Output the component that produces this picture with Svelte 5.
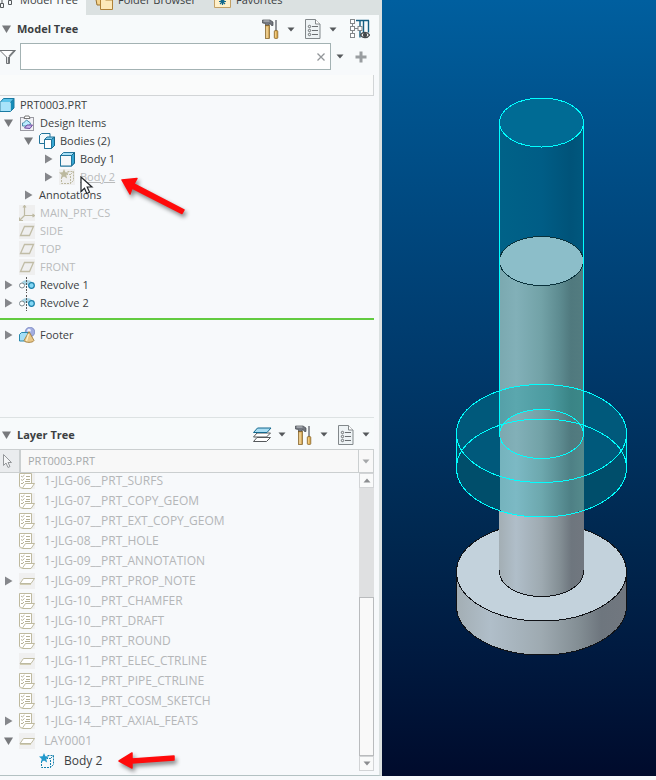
<script>
  const modelRows = [
    { level: 0, icon: 'part', text: 'PRT0003.PRT' },
    { level: 1, icon: 'clip', text: 'Design Items', arrow: 'down' },
    { level: 2, icon: 'bodies', text: 'Bodies (2)', arrow: 'down' },
    { level: 3, icon: 'body', text: 'Body 1', arrow: 'right' },
    { level: 3, icon: 'ghost', text: 'Body 2', arrow: 'right', tone: 'hidden', link: true },
    { level: 2, text: 'Annotations', arrow: 'right' },
    { level: 1, icon: 'csys', text: 'MAIN_PRT_CS', tone: 'hidden' },
    { level: 1, icon: 'plane', text: 'SIDE', tone: 'hidden' },
    { level: 1, icon: 'plane', text: 'TOP', tone: 'hidden' },
    { level: 1, icon: 'plane', text: 'FRONT', tone: 'hidden' },
    { level: 1, icon: 'revolve', text: 'Revolve 1', arrow: 'right' },
    { level: 1, icon: 'revolve', text: 'Revolve 2', arrow: 'right' }
  ];

  const layers = [
    { icon: 'rules', text: '1-JLG-06__PRT_SURFS' },
    { icon: 'rules', text: '1-JLG-07__PRT_COPY_GEOM' },
    { icon: 'rules', text: '1-JLG-07__PRT_EXT_COPY_GEOM' },
    { icon: 'rules', text: '1-JLG-08__PRT_HOLE' },
    { icon: 'rules', text: '1-JLG-09__PRT_ANNOTATION' },
    { icon: 'layer', text: '1-JLG-09__PRT_PROP_NOTE', arrow: 'right' },
    { icon: 'rules', text: '1-JLG-10__PRT_CHAMFER' },
    { icon: 'rules', text: '1-JLG-10__PRT_DRAFT' },
    { icon: 'rules', text: '1-JLG-10__PRT_ROUND' },
    { icon: 'layer', text: '1-JLG-11__PRT_ELEC_CTRLINE' },
    { icon: 'rules', text: '1-JLG-12__PRT_PIPE_CTRLINE' },
    { icon: 'rules', text: '1-JLG-13__PRT_COSM_SKETCH' },
    { icon: 'rules', text: '1-JLG-14__PRT_AXIAL_FEATS', arrow: 'right' },
    { icon: 'layer', text: 'LAY0001', arrow: 'down' },
    { icon: 'star', text: 'Body 2', child: true }
  ];

  let filter = $state('');
</script>

{#snippet twisty(dir)}
  <svg class="twisty" viewBox="0 0 10 10" aria-hidden="true">
    {#if dir === 'right'}
      <path d="M1 .5V9.500L8.500 5z" fill="#85878b" />
    {:else if dir === 'down'}
      <path d="M0 1.500H9L4.500 9z" fill="#77797c" />
    {/if}
  </svg>
{/snippet}

{#snippet caret()}
  <svg class="caret" viewBox="0 0 8 5" aria-hidden="true"><path d="M.5 .5h7L4 4.500z" fill="#55585b" /></svg>
{/snippet}

{#snippet tools()}
  <svg class="ico20" viewBox="0 0 20 20" aria-hidden="true">
    <path d="M1.500 1h7.500l3 2v3.500h-1.500L9.500 5H8v2H4.500V4.500L1.500 4z" fill="#73777f" stroke="#44484e" stroke-width=".7" />
    <path d="M2.500 2h6" stroke="#c8ccd2" />
    <rect x="4.500" y="6.500" width="4" height="13" fill="#d4a95c" stroke="#7d5a22" stroke-width=".7" />
    <path d="M6 7.500v11.500" stroke="#fae3ac" stroke-width="1.200" />
    <path d="M15 1v11" stroke="#777b82" stroke-width="1.600" />
    <rect x="13.300" y="11.500" width="3.500" height="8" rx="1" fill="#d9a748" stroke="#7d5a22" stroke-width=".7" />
    <path d="M14.700 12.500v6" stroke="#f5d594" />
  </svg>
{/snippet}

{#snippet sheet()}
  <svg class="ico20" viewBox="0 0 20 20" aria-hidden="true">
    <path d="M2.500 .5h10l4.500 4.500v14.500H2.500z" fill="#eef3f5" stroke="#82888b" />
    <path d="M12.500 .5V5H17" fill="#fff" stroke="#82888b" />
    <g fill="none" stroke="#6b6f72"><circle cx="6.500" cy="7.500" r="1.200" /><circle cx="6.500" cy="11.500" r="1.200" /><circle cx="6.500" cy="15.500" r="1.200" /><path d="M9 7.500h6M9 11.500h6M9 15.500h6" /></g>
  </svg>
{/snippet}

{#snippet icon(name)}
  <svg class="ico16" viewBox="0 0 16 16" aria-hidden="true">
    {#if name === 'part'}
      <path d="M1 5.500L4.500 1.500H15L11.500 5.500z" fill="#5cc4ea" /><path d="M11.500 5.500L15 1.500V11L11.500 14.500z" fill="#138cb8" />
      <rect x="1.500" y="5.500" width="10" height="9" fill="#a7e3fa" /><path d="M1 14.500V5.500L4.500 1.500H15V11l-3.500 3.500zM15 1.500l-3.500 4" fill="none" stroke="#197aa2" />
    {:else if name === 'clip'}
      <rect x="1.500" y="2.500" width="13" height="13" fill="#f1f1f6" stroke="#9a9aa2" /><path d="M5 3.500l1-2.500h4l1 2.500z" fill="#fff" stroke="#777" />
      <path d="M3.500 8h1l3-3 4 3-1 3H3.500z" fill="#bcecff" stroke="#4b8ca8" /><path d="M5.500 13l2.500-3h5.500L11 13.500z" fill="#c9b4ee" stroke="#6b4a9c" />
    {:else if name === 'bodies'}
      <path d="M.5 2.500l2-2h8.500v10H.5z" fill="#f4fafc" stroke="#22749b" /><path d="M5.500 6.500l2.500-2.500H15.500v8.500l-3 3h-7z" fill="#83cdeb" stroke="#22749b" /><path d="M12.500 6.500l3-2.500v8.500l-3 3z" fill="#39a9d5" stroke="#176689" /><path d="M5.500 6.500h7v9h-7z" fill="#fff" stroke="#22749b" />
    {:else if name === 'body'}
      <path d="M1.500 4.500L4.500 1.500h11V12l-3 3h-11z" fill="#a4def5" stroke="#22749b" /><path d="M12.500 4.500L15.500 1.500V12l-3 3z" fill="#35a6d2" stroke="#176689" /><rect x="1.500" y="4.500" width="11" height="10.500" fill="#f4f7f9" stroke="#22749b" />
    {:else if name === 'ghost' || name === 'star'}
      {#if name === 'ghost'}<rect width="16" height="16" fill="#efefef" />{/if}
      <g fill="none" stroke={name === 'ghost' ? '#bcb99f' : '#1380ad'} stroke-dasharray="2 1"><path d="M2.500 8v6.500h9V5.500H8" /><path d="M8.500 2.500h6v9l-3 3M11.500 5.500l3-3" /></g>
      <path d="M5 0l1.400 3.300L10 3.600 7.300 6l.8 3.500L5 7.600 1.900 9.500 2.700 6 0 3.600l3.600-.3z" fill={name === 'ghost' ? '#bcb99f' : '#2199cc'} />
    {:else if name === 'csys'}
      <rect width="16" height="16" fill="#efefef" /><path d="M5.500 1v9.500H15M5.500 10.500L1 15M4 2.500L5.500 .5 7 2.500M13.500 9l2 1.500-2 1.500M.5 12.500V15.500H4" fill="none" stroke="#bebaa3" stroke-width="1.200" />
    {:else if name === 'plane'}
      <rect width="16" height="16" fill="#efefef" /><path d="M1.500 12.500L5.500 3.500h9l-4 9z" fill="none" stroke="#c0bca6" stroke-width="1.300" />
    {:else if name === 'revolve'}
      <path d="M2.500 6C4 2 12 2 13.500 6L11 8H5z" fill="#a9d5e5" /><circle cx="3" cy="8.500" r="2.500" fill="#fff" stroke="#7f8b91" /><circle cx="12.500" cy="8.500" r="2.800" fill="#83d8f6" stroke="#187da8" stroke-width="1.200" /><path d="M7.500 0v16" stroke="#555" stroke-dasharray="2 1" />
    {:else if name === 'footer'}
      <circle cx="11" cy="5" r="4.800" fill="#a2ade0" stroke="#6677b6" stroke-width=".6" /><circle cx="10" cy="3.500" r="1.800" fill="#eef1ff" /><path d="M.5 7.500l2-2H9v7l-1.500 1.500h-7z" fill="#a5def6" stroke="#2889ad" /><path d="M10 4.500l5 9c-1 2.500-9 2.500-10 0z" fill="#e9c88a" stroke="#9b7430" stroke-width=".8" /><path d="M9.500 7l-2 7" stroke="#fff0c8" stroke-width="1.300" />
    {:else if name === 'layer'}
      <rect width="16" height="16" fill="#f0f0f0" /><path d="M1 10.500L4.500 5.500h11l-3.500 5z" fill="#fff" stroke="#bdb9a0" /><path d="M1 11.500h11" stroke="#d2ceb4" />
    {:else if name === 'rules'}
      <rect width="16" height="16" fill="#f0f0f0" /><path d="M12.500 10.500V.5H.5v13l3 2h8.500L15.500 10.500H6.500l-3 4.500" fill="#fff" stroke="#bfba9f" />
      <path d="M2 3l1.300 1L5.500 2M2 6.500l1.300 1L5.500 5.500M2 10l1 1 2-2M7 3.500h4M7 6.500h4M6 8.500h5" fill="none" stroke="#b4af94" />
    {/if}
  </svg>
{/snippet}

<div class="app">
  <aside class="side">
    <nav class="tabs">
      <button class="tab active">
        <svg class="ico16" viewBox="0 0 16 16" aria-hidden="true"><path d="M.5 11.500h3v4h-3zM8.500 8.500h3v4h-3zM2 11V5h8v3" fill="none" stroke="#55595c" /></svg>
        Model Tree
      </button>
      <button class="tab">
        <svg class="ico20" viewBox="0 0 20 20" aria-hidden="true"><path d="M1 4h5l1 2h7v9H3z" fill="#f5d48f" stroke="#99702d" /><path d="M6.500 9.500V8h5v2h7v9.500h-12z" fill="#fde8b8" stroke="#b08137" /></svg>
        Folder Browser
      </button>
      <button class="tab">
        <svg class="ico20" viewBox="0 0 20 20" aria-hidden="true"><path d="M2.500 3.500h16v14h-16z" fill="#fff0c9" stroke="#c2a065" /><path d="M10.500 8v7M7 11.500h7M8 9l5 5M13 9l-5 5" stroke="#11698d" stroke-width="1.200" /></svg>
        Favorites
      </button>
    </nav>

    <section class="model">
      <header class="head model-head">
        <button class="title">{@render twisty('down')}Model Tree</button>
        <div class="bar">
          <button class="tool" aria-label="Settings">{@render tools()}{@render caret()}</button>
          <button class="tool" aria-label="Show">{@render sheet()}{@render caret()}</button>
          <button class="tool columns-tool" aria-label="Tree columns">
            <svg class="ico20" viewBox="0 0 20 20" aria-hidden="true">
              <path d="M6 1.500h4v17M13.500 1.500v13M18.500 1.500v12M10 1.500h9" fill="none" stroke="#155f82" stroke-width="1.400" />
              <g fill="#fff" stroke="#84888b"><path d="M2.500 5v10M5 9.500h3" /><rect x=".5" y=".5" width="4" height="4" /><rect x=".5" y="7.500" width="4" height="4" /><rect x=".5" y="14.500" width="4" height="4" /><rect x="8" y="7.500" width="4" height="4" /></g>
              <path d="M10.500 16c2-3.500 7-3.500 9 0-2 3.500-7 3.500-9 0z" fill="#fff" stroke="#45494c" stroke-width="1.400" /><circle cx="15" cy="16" r="2.200" fill="#45494c" />
            </svg>
          </button>
        </div>
      </header>

      <div class="filter">
        <svg class="funnel" viewBox="0 0 16 16" aria-hidden="true"><path d="M0 1.500h15.500L9.500 8v6.500h-3V8z" fill="#fff" stroke="#6e7275" /><path d="M8.500 8v6M14 2L9 7.500" stroke="#777b7e" stroke-width="1.500" /></svg>
        <div class="field">
          <input type="text" aria-label="Filter" bind:value={filter} />
          <button aria-label="Clear" onclick={() => (filter = '')}><svg class="cross" viewBox="0 0 10 10"><path d="M1.500 1.500l7 7M8.500 1.500l-7 7" stroke="#929699" stroke-width="1.300" /></svg></button>
        </div>
        <button class="drop" aria-label="Filter options">{@render caret()}</button>
        <button class="add" aria-label="Add"><svg class="plus" viewBox="0 0 12 12"><path d="M6 .5v11M.5 6h11" stroke="#999da0" stroke-width="3" /></svg></button>
      </div>
      <div class="columns"></div>

      <ul class="tree">
        {#each modelRows as row}
          <li class="row l{row.level} {row.tone ?? ''}">
            {#if row.level > 0}{@render twisty(row.arrow)}{/if}
            {#if row.icon}{@render icon(row.icon)}{/if}
            {#if row.link}
              <a href="#body2">{row.text}</a>
              <svg class="pointer" viewBox="0 0 14 20" aria-hidden="true"><path d="M1 1v14.500l3.500-3.300 2.300 5.300 2.700-1.200L7.200 11H12z" fill="#fff" stroke="#22262a" stroke-width="1.200" /></svg>
              <svg class="callout one" viewBox="0 0 76 46" aria-hidden="true"><path d="M6 6L21 4.500l-3 5.500L68 36l-2 3.500L16 14l-2 6z" fill="#ff0b0b" stroke="#ff0b0b" stroke-width="1.500" stroke-linejoin="round" /></svg>
            {:else}
              <span>{row.text}</span>
            {/if}
          </li>
        {/each}
      </ul>
      <hr class="insert" />
      <ul class="tree">
        <li class="row l1">{@render twisty('right')}{@render icon('footer')}<span>Footer</span></li>
      </ul>
    </section>

    <section class="layers">
      <header class="head layer-head">
        <button class="title">{@render twisty('down')}Layer Tree</button>
        <div class="bar">
          <button class="tool" aria-label="Layer">
            <svg class="ico20" viewBox="0 0 20 20" aria-hidden="true"><path d="M1.500 16.500L5 12.500h13.500l-4 4z" fill="#fff" stroke="#55585b" /><path d="M1.500 12L5 8h13.500l-4 4z" fill="#fff" stroke="#55585b" /><path d="M1.500 7.500L5.500 3H19l-4 4.500z" fill="#a9ddf3" stroke="#15698e" /></svg>
            {@render caret()}
          </button>
          <button class="tool" aria-label="Settings">{@render tools()}{@render caret()}</button>
          <button class="tool" aria-label="Show">{@render sheet()}{@render caret()}</button>
        </div>
      </header>
      <div class="scope">
        <button class="pick" aria-label="Select model"><svg class="arrow" viewBox="0 0 12 16"><path d="M2.500 1.500v11l2.500-2.500 2 4.500 2-1L7 9.500h3.500z" fill="#f4f5f6" stroke="#94979a" /></svg></button>
        <div class="combo">
          <select aria-label="Active model"><option>PRT0003.PRT</option></select>
          <span class="chev"><svg class="caret" viewBox="0 0 8 5" aria-hidden="true"><path d="M.5 .5h7L4 4.500z" fill="#a5a7a9" /></svg></span>
        </div>
      </div>
      <div class="scroller">
        <ul class="list">
          {#each layers as row}
            <li class="item" class:child={row.child}>
              {@render twisty(row.arrow)}{@render icon(row.icon)}<span>{row.text}</span>
              {#if row.child}
                <svg class="callout two" viewBox="0 0 64 22" aria-hidden="true"><path d="M3 12L16 4v6l42-3v4l-42 3v5z" fill="#ff0b0b" stroke="#ff0b0b" stroke-width="1.500" stroke-linejoin="round" /></svg>
              {/if}
            </li>
          {/each}
        </ul>
        <div class="scrollbar">
          <button aria-label="Scroll up"><svg class="caret" viewBox="0 0 8 5"><path d="M.5 4.500h7L4 .5z" fill="#8b8d90" /></svg></button>
          <div class="track"></div>
          <div class="thumb"></div>
          <button aria-label="Scroll down"><svg class="caret" viewBox="0 0 8 5"><path d="M.5 .5h7L4 4.500z" fill="#8b8d90" /></svg></button>
        </div>
      </div>
    </section>
  </aside>

  <main class="view">
    <svg class="scene" viewBox="382 0 274 776" preserveAspectRatio="xMidYMin meet" role="img" aria-label="Part model" shape-rendering="crispEdges">
      <defs>
        <linearGradient id="metal"><stop offset="0" stop-color="#a3aeb4" /><stop offset=".2" stop-color="#b0bec9" /><stop offset=".5" stop-color="#9eaab1" /><stop offset=".72" stop-color="#838e94" /><stop offset=".85" stop-color="#6e767e" /><stop offset="1" stop-color="#71777f" /></linearGradient>
        <linearGradient id="teal"><stop offset="0" stop-color="#7ba9b0" /><stop offset=".2" stop-color="#82b0b8" /><stop offset=".5" stop-color="#72a2a7" /><stop offset=".72" stop-color="#5d8b90" /><stop offset=".85" stop-color="#50797e" /><stop offset="1" stop-color="#537c80" /></linearGradient>
        <linearGradient id="low"><stop offset="0" stop-color="#75b3bd" /><stop offset=".2" stop-color="#7cb9c4" /><stop offset=".5" stop-color="#6da8ae" /><stop offset=".85" stop-color="#4e8085" /><stop offset="1" stop-color="#558a8c" /></linearGradient>
        <linearGradient id="band"><stop offset="0" stop-color="#55a0a8" /><stop offset=".2" stop-color="#5ba7ae" /><stop offset=".6" stop-color="#4b9a9f" /><stop offset=".85" stop-color="#3a8486" /><stop offset="1" stop-color="#3c8888" /></linearGradient>
        <linearGradient id="glass"><stop offset="0" stop-color="#006288" /><stop offset=".5" stop-color="#005d86" /><stop offset=".85" stop-color="#005379" /><stop offset="1" stop-color="#00587e" /></linearGradient>
      </defs>

      <path d="M456.500 572V606A85 49 0 0 0 626.500 606V572z" fill="url(#metal)" stroke="#101216" />
      <ellipse cx="541.500" cy="572" rx="85" ry="49" fill="#c3d2dc" stroke="#101216" />
      <path d="M499 261V572A42.500 24.500 0 0 0 584 572V261z" fill="url(#metal)" />
      <path d="M499.500 570V572A42 24.500 0 0 0 583.500 572V570" fill="none" stroke="#101216" />

      <rect x="499.500" y="122.500" width="84" height="138.500" fill="url(#glass)" />
      <rect x="499.500" y="261" width="84" height="173" fill="url(#teal)" />
      <path d="M456.500 433.500A85 49 0 0 1 626.500 433.500V468A85 49 0 0 1 456.500 468z" fill="#004e6b" />
      <ellipse cx="541.500" cy="433.500" rx="85" ry="49" fill="#00597b" />
      <path d="M499.500 391Q541.500 378 583.500 391V510Q541.500 524 499.500 510z" fill="url(#low)" />
      <path d="M499.500 391Q541.500 378 583.500 391V434A42 24.500 0 0 0 499.500 434z" fill="url(#band)" />
      <ellipse cx="541.500" cy="434" rx="42" ry="24.500" fill="url(#teal)" />

      <ellipse cx="541.500" cy="122.500" rx="42" ry="24.500" fill="#006b94" />
      <ellipse cx="541.500" cy="261" rx="42" ry="24.500" fill="#8cbec9" stroke="#09313b" />
      <g fill="none" stroke="#00ffff">
        <ellipse cx="541.500" cy="122.500" rx="42" ry="24.500" />
        <path d="M499.500 119V434M583.500 119V434" />
        <ellipse cx="541.500" cy="434" rx="42" ry="24.500" />
        <ellipse cx="541.500" cy="433.500" rx="85" ry="49" />
        <ellipse cx="541.500" cy="468" rx="85" ry="49" />
        <path d="M456.500 433V469M626.500 433V469" />
      </g>
    </svg>
  </main>
</div>

<style>
  :global(body) { margin: 0; background: #f7f9fb; }
  .app { display: grid; grid-template-columns: 382px 1fr; min-height: 100vh; padding-bottom: 4px; box-sizing: border-box; overflow: hidden; font: 11px/18px "Open Sans", "Noto Sans", sans-serif; color: #3c3f42; }
  button { border: 0; padding: 0; background: none; font: inherit; color: inherit; display: flex; align-items: center; }
  ul { list-style: none; margin: 0; padding: 0; }
  svg { display: block; flex: none; }
  .ico16 { width: 16px; height: 16px; }
  .ico20 { width: 20px; height: 20px; }
  .twisty { width: 10px; height: 10px; }
  .caret { width: 8px; height: 5px; }

  .side { display: flex; flex-direction: column; background: #f7f9fb; border-right: 3px solid #dbe1e1; border-bottom: 1px solid #b3c1c2; box-sizing: border-box; min-width: 0; }
  .tabs { display: flex; height: 30px; margin-top: -15px; background: #dbe1e1; }
  .tab { gap: 4px; padding: 0 8px; white-space: nowrap; }
  .tab.active { background: #f7fafb; padding-left: 0; }

  .head { display: flex; align-items: center; justify-content: space-between; padding-left: 2px; background: #f7fafb; }
  .model-head { height: 28px; padding-right: 9px; }
  .layer-head { height: 32px; box-sizing: border-box; margin-right: 5px; padding-top: 2px; padding-right: 4px; border-top: 1px solid #dde2e3; }
  .title { gap: 5px; font-weight: 700; }
  .bar { display: flex; gap: 8px; }
  .tool { gap: 6px; }
  .columns-tool { margin-left: 5px; }

  .filter { display: flex; align-items: center; height: 27px; padding-right: 12px; background: #f7fafb; }
  .funnel { width: 16px; height: 16px; margin-right: 4px; }
  .field { flex: 1; display: flex; height: 27px; border: 1px solid #a3b2b3; box-sizing: border-box; background: #fff; min-width: 0; }
  .field input { flex: 1; min-width: 0; border: 0; padding: 0 6px; background: none; font: inherit; outline: none; }
  .field button { padding: 0 4px; }
  .cross { width: 10px; height: 10px; }
  .drop { padding: 0 5px; }
  .add { margin-left: 6px; }
  .plus { width: 12px; height: 12px; }
  .columns { height: 20px; margin: 5px 5px 0 0; border: solid #d2d5d7; border-width: 0 1px 1px 0; background: #fafbfb; }

  .model { flex: none; }
  .row { display: flex; align-items: center; height: 18px; gap: 5px; position: relative; }
  .l0 .ico16 { margin-left: -1px; }
  .l1 { padding-left: 4px; }
  .l2 { padding-left: 24px; }
  .l3 { padding-left: 44px; }
  .hidden { color: #b9bbbc; }
  .row a { color: inherit; }
  .insert { margin: 6px 5px 6px 0; border: 0; height: 2px; background: #62cb40; }

  .pointer { position: absolute; left: 80px; top: 8px; width: 14px; height: 20px; z-index: 2; }
  .callout { position: absolute; filter: drop-shadow(2px 3px 2px #0007); z-index: 1; }
  .one { left: 116px; top: 6px; width: 76px; height: 46px; }
  .two { left: 116px; top: -2px; width: 64px; height: 22px; }

  .layers { flex: 1; display: flex; flex-direction: column; margin-top: 73px; }
  .scope { display: flex; height: 24px; margin-right: 5px; border: 1px solid #cbcfd0; border-left: 0; box-sizing: border-box; }
  .pick { width: 21px; justify-content: center; padding-right: 6px; background: #eaecee; border-right: 2px solid #cbcfd0; box-sizing: border-box; }
  .arrow { width: 12px; height: 16px; }
  .combo { flex: 1; display: flex; position: relative; background: #f8f8f8; }
  .combo select { flex: 1; appearance: none; border: 0; background: none; padding: 0 20px 0 7px; font: inherit; color: #a5a8aa; }
  .chev { position: absolute; top: 0; right: 0; bottom: 0; width: 14px; display: flex; align-items: center; justify-content: center; border-left: 1px solid #cbcfd0; pointer-events: none; }
  .scroller { flex: 1; display: flex; padding: 0 5px 4px 0; min-height: 0; font-size: 12px; }
  .list { flex: 1; overflow: hidden; margin-bottom: -4px; }
  .item { display: flex; align-items: center; height: 20px; gap: 5px; padding-left: 4px; color: #b4b6b8; position: relative; }
  .item:first-child { margin-top: -2px; }
  .item span { margin-left: 4px; }
  .item.child { padding-left: 24px; color: #3c3f42; }
  .scrollbar { width: 15px; display: flex; flex-direction: column; }
  .scrollbar button { height: 15px; flex: none; justify-content: center; border: 1px solid #d2d4d6; background: #f9fafa; }
  .track { flex: 110; background: #dfe0e1; }
  .thumb { flex: 159; border: 1px solid #b9bbbd; background: #f9f9f9; box-sizing: border-box; }

  .view { background: linear-gradient(#005f9f, #00548f 13%, #003a6c 46%, #002850 69%, #001a40 84%, #000b2c); min-width: 0; overflow: hidden; }
  .scene { width: 100%; height: auto; }
</style>
